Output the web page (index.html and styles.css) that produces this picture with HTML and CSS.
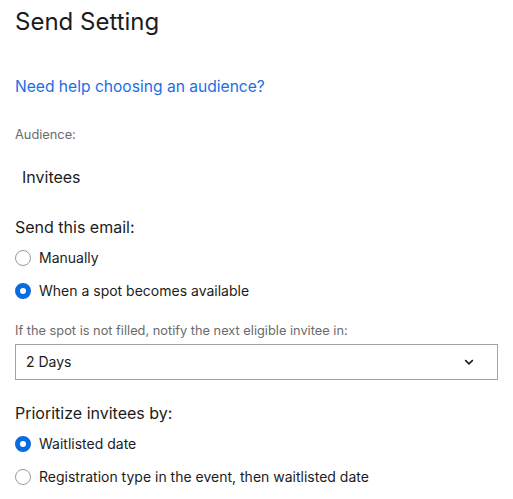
FILE: index.html
```html
<!DOCTYPE html>
<html lang="en">
<head>
<meta charset="utf-8">
<title>Send Setting</title>
<link rel="stylesheet" href="styles.css">
</head>
<body>
<main class="page">
  <h1 class="title">Send Setting</h1>
  <a class="help-link" href="#">Need help choosing an audience?</a>
  <div class="field-label">Audience:</div>
  <div class="audience-value">Invitees</div>

  <div class="section-label">Send this email:</div>
  <div class="radio-group">
    <label class="radio-row"><span class="radio"></span><span class="radio-text">Manually</span></label>
    <label class="radio-row"><span class="radio checked"></span><span class="radio-text">When a spot becomes available</span></label>
  </div>

  <div class="hint">If the spot is not filled, notify the next eligible invitee in:</div>
  <div class="select">
    <span class="select-value">2 Days</span>
    <svg class="chevron" width="10" height="6" viewBox="0 0 10 6"><path d="M1.2 1.2 L5 4.8 L8.8 1.2" fill="none" stroke="#1a1a1a" stroke-width="1.6"/></svg>
  </div>

  <div class="section-label second">Prioritize invitees by:</div>
  <div class="radio-group">
    <label class="radio-row"><span class="radio checked"></span><span class="radio-text">Waitlisted date</span></label>
    <label class="radio-row"><span class="radio"></span><span class="radio-text">Registration type in the event, then waitlisted date</span></label>
  </div>
</main>
</body>
</html>
```
FILE: styles.css
```css
html, body {
  margin: 0;
  padding: 0;
  background: #ffffff;
}
body {
  font-family: Inter, "Noto Sans", "Liberation Sans", sans-serif;
  color: #1c1c1c;
}
.page {
  padding: 6px 15px 0 15px;
  display: flex;
  flex-direction: column;
  align-items: flex-start;
}
.title {
  margin: 0;
  font-size: 24px;
  line-height: 32px;
  font-weight: 400;
  color: #1c1c1c;
}
.help-link {
  margin-top: 37px;
  font-size: 15.6px;
  line-height: 24px;
  color: #1a6ee6;
  text-decoration: none;
}
.field-label {
  margin-top: 27px;
  font-size: 12.8px;
  line-height: 18px;
  color: #6b6b6b;
}
.audience-value {
  margin-top: 21px;
  padding-left: 7px;
  font-size: 16px;
  line-height: 24px;
}
.section-label {
  margin-top: 26px;
  font-size: 16px;
  line-height: 24px;
}
.section-label.second {
  margin-top: 21px;
}
.radio-group {
  margin-top: 7px;
  display: flex;
  flex-direction: column;
  gap: 9px;
}
.radio-row {
  display: flex;
  align-items: center;
  gap: 8px;
  height: 24px;
  font-size: 14px;
  line-height: 24px;
}
.radio {
  box-sizing: border-box;
  width: 16px;
  height: 16px;
  border-radius: 50%;
  border: 1px solid #9a9a9a;
  background: #ffffff;
  flex: none;
}
.radio.checked {
  border: 5px solid #0a6ae0;
}
.hint {
  margin-top: 19px;
  font-size: 12.8px;
  line-height: 18px;
  color: #6b6b6b;
}
.select {
  margin-top: 4px;
  box-sizing: border-box;
  width: 100%;
  height: 36px;
  border: 1px solid #a3a3a3;
  display: flex;
  align-items: center;
  justify-content: space-between;
  padding: 0 23px 0 10px;
}
.select-value {
  font-size: 14px;
  line-height: 24px;
}
.chevron {
  display: block;
}
```
